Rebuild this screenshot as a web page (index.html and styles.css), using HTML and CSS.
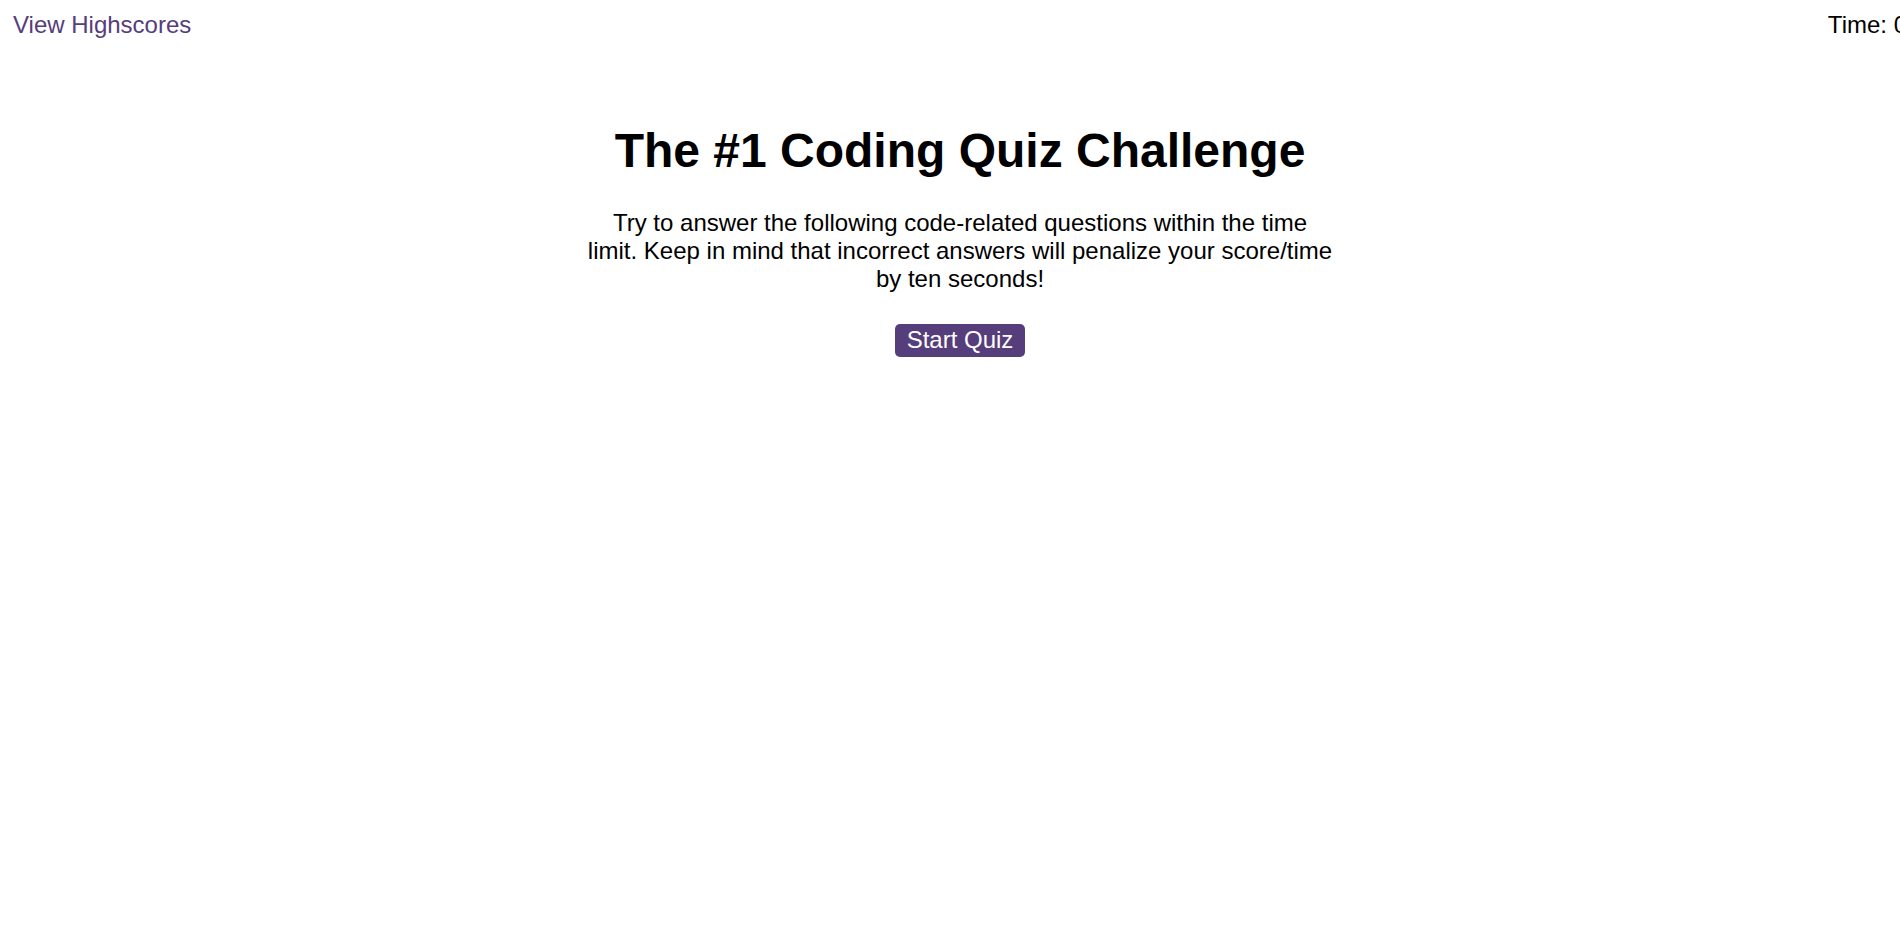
FILE: index.html
```html
<!DOCTYPE html>
<html lang="en">
<head>
    <meta charset="UTF-8">
    <meta name="viewport" content="width=device-width, initial-scale=1.0">
    <title>Coding Quiz</title>
    <link rel="stylesheet" href="styles.css">
</head>
<body>
    <header class="top-bar">
        <a href="#" class="highscores-link">View Highscores</a>
        <span class="timer">Time: <span id="time">0</span></span>
    </header>

    <main class="quiz">
        <section id="start-screen" class="start-screen">
            <h1>The #1 Coding Quiz Challenge</h1>
            <p>Try to answer the following code-related questions within the time limit. Keep in mind that incorrect answers will penalize your score/time by ten seconds!</p>
            <button id="start" class="start-btn">Start Quiz</button>
        </section>
    </main>
</body>
</html>
```

FILE: styles.css
```css
html {
    overflow-x: hidden;
}
body {
    margin: 0;
    padding: 11px 10px 10px;
    width: 100%;
    font-family: 'Liberation Sans', Arial, sans-serif;
    font-size: 24px;
    color: #000;
    background: #fff;
}

.top-bar {
    display: flex;
    justify-content: space-between;
    padding: 0 3px;
}
.highscores-link {
    color: #563d7c;
    text-decoration: none;
}

.quiz {
    margin-top: 52px;
}
.start-screen {
    display: flex;
    flex-direction: column;
    align-items: center;
    max-width: 750px;
    margin: 0 auto;
    text-align: center;
}
h1 {
    font-size: 48px;
    margin: 32px 0 31px;
}
p {
    margin: 0 0 31px;
}
.start-btn {
    background: #563d7c;
    color: #fff;
    border: none;
    border-radius: 5px;
    padding: 2px 12px 3px;
    font: inherit;
    cursor: pointer;
}
```
